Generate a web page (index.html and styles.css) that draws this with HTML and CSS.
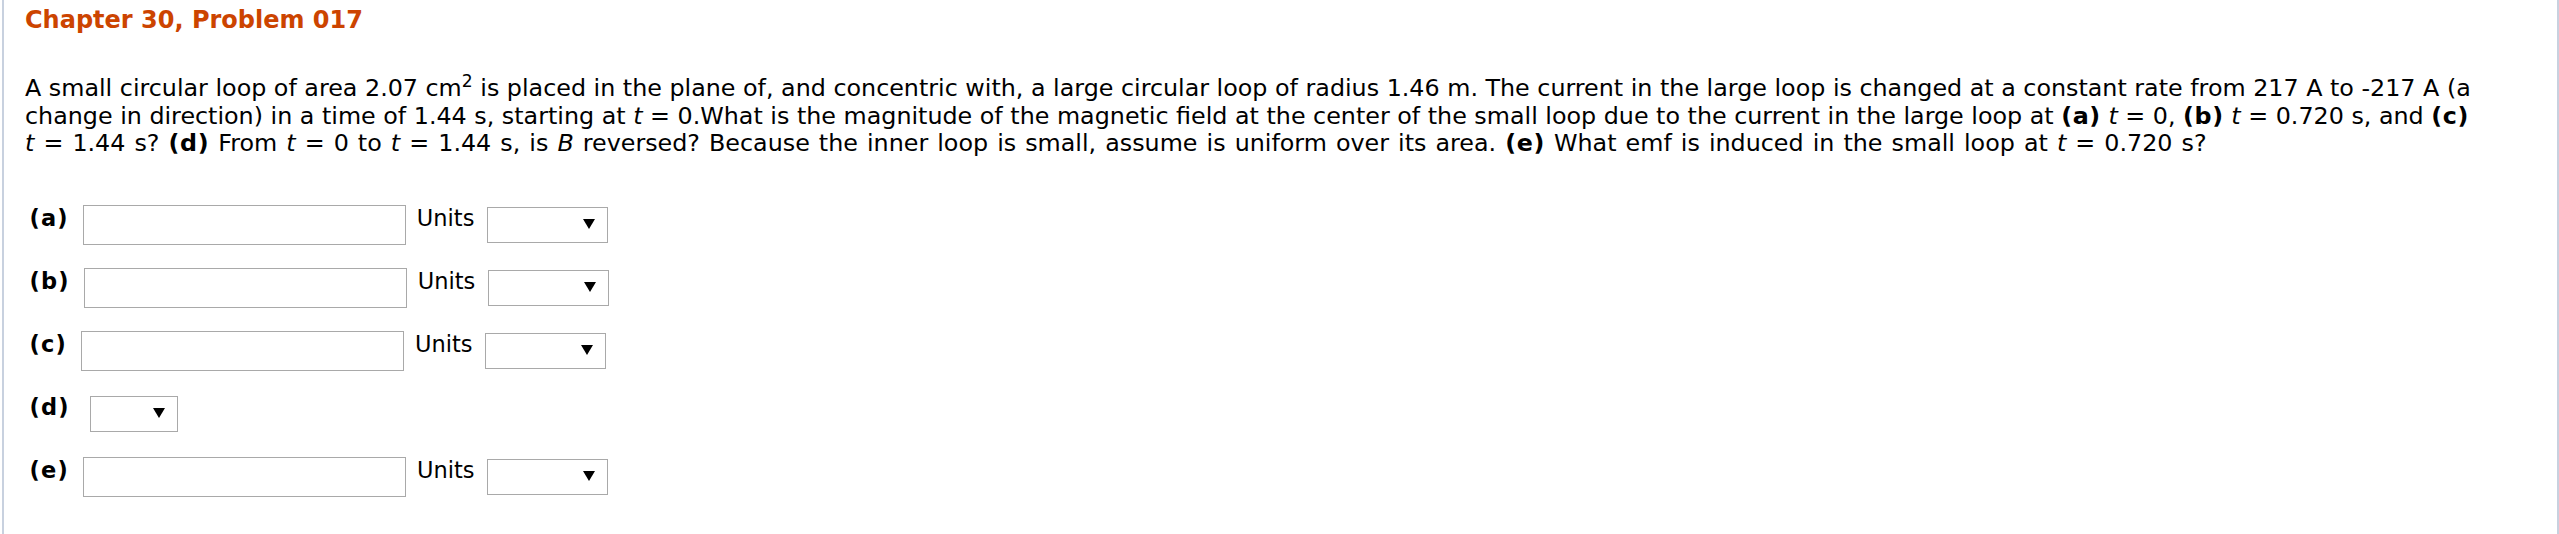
FILE: index.html
```html
<!DOCTYPE html>
<html lang="en">
<head>
<meta charset="utf-8">
<title>Chapter 30, Problem 017</title>
<link rel="stylesheet" href="styles.css">
</head>
<body>
<div class="page">
  <h2 class="title">Chapter 30, Problem 017</h2>
  <p class="question">A small circular loop of area 2.07 cm<sup>2</sup> is placed in the plane of, and concentric with, a large circular loop of radius 1.46 m. The current in the large loop is changed at a constant rate from 217 A to -217 A (a<br>change in direction) in a time of 1.44 s, starting at <i>t</i> = 0.What is the magnitude of the magnetic field at the center of the small loop due to the current in the large loop at <b>(a)</b> <i>t</i> = 0, <b>(b)</b> <i>t</i> = 0.720 s, and <b>(c)</b><br><span class="last"><i>t</i> = 1.44 s? <b>(d)</b> From <i>t</i> = 0 to <i>t</i> = 1.44 s, is <i>B</i> reversed? Because the inner loop is small, assume is uniform over its area. <b>(e)</b> What emf is induced in the small loop at <i>t</i> = 0.720 s?</span></p>

  <div class="answers">
    <div class="row">
      <span class="label">(a)</span>
      <input class="field" type="text">
      <span class="units">Units</span>
      <span class="sel"><select><option></option></select><svg class="arrow" viewBox="0 0 12 10"><polygon points="0,0 12,0 6,10"/></svg></span>
    </div>
    <div class="row">
      <span class="label">(b)</span>
      <input class="field" type="text">
      <span class="units">Units</span>
      <span class="sel"><select><option></option></select><svg class="arrow" viewBox="0 0 12 10"><polygon points="0,0 12,0 6,10"/></svg></span>
    </div>
    <div class="row">
      <span class="label">(c)</span>
      <input class="field" type="text">
      <span class="units">Units</span>
      <span class="sel"><select><option></option></select><svg class="arrow" viewBox="0 0 12 10"><polygon points="0,0 12,0 6,10"/></svg></span>
    </div>
    <div class="row">
      <span class="label">(d)</span>
      <span class="sel sel-small"><select><option></option></select><svg class="arrow" viewBox="0 0 12 10"><polygon points="0,0 12,0 6,10"/></svg></span>
    </div>
    <div class="row">
      <span class="label">(e)</span>
      <input class="field" type="text">
      <span class="units">Units</span>
      <span class="sel"><select><option></option></select><svg class="arrow" viewBox="0 0 12 10"><polygon points="0,0 12,0 6,10"/></svg></span>
    </div>
  </div>
</div>
</body>
</html>
```

FILE: styles.css
```css
html, body {
  margin: 0;
  padding: 0;
  background: #ffffff;
}

.page {
  margin-left: 2px;
  min-height: 534px;
  box-sizing: border-box;
  border-left: 2px solid #c8d1df;
  border-right: 2px solid #c8d1df;
  padding: 6px 10px 0 21px;
  font-family: "DejaVu Sans", Verdana, sans-serif;
  font-size: 22.5px;
  line-height: 1.215;
  color: #000000;
}

.title {
  margin: 0;
  font-size: 24px;
  font-weight: bold;
  line-height: 1.215;
  color: #cc4400;
}

.question {
  margin: 40px 0 0 0;
  font-size: 23.8px;
  line-height: 27.5px;
  white-space: nowrap;
}

.question .last {
  word-spacing: 1.5px;
}

.question sup {
  font-size: 0.72em;
  line-height: 0;
  vertical-align: 0.5em;
}

.question b {
  letter-spacing: 0.6px;
}

.answers {
  margin-top: 47px;
  display: flex;
  flex-direction: column;
  gap: 23px;
}

.row {
  display: flex;
  align-items: flex-start;
  height: 40px;
  padding-left: 4.5px;
}

.label {
  font-weight: bold;
  letter-spacing: 1.2px;
  margin-right: 14px;
}

.field {
  box-sizing: border-box;
  width: 323px;
  height: 40px;
  margin: 0;
  padding: 0 4px;
  border: 1px solid #a9a9a9;
  border-radius: 0;
  background: #ffffff;
  font: inherit;
}

.units {
  margin-left: 11px;
  margin-right: 12.5px;
}

.sel {
  position: relative;
  display: block;
  width: 121px;
  height: 36px;
  margin-top: 2px;
}

.sel-small {
  width: 88px;
  margin-left: 6px;
}

.sel select {
  -webkit-appearance: none;
  appearance: none;
  box-sizing: border-box;
  width: 100%;
  height: 100%;
  margin: 0;
  border: 1px solid #a9a9a9;
  border-radius: 0;
  background: #ffffff;
  font: inherit;
}

.arrow {
  position: absolute;
  right: 13px;
  top: 12px;
  width: 12px;
  height: 10px;
  fill: #000000;
  pointer-events: none;
}
```
